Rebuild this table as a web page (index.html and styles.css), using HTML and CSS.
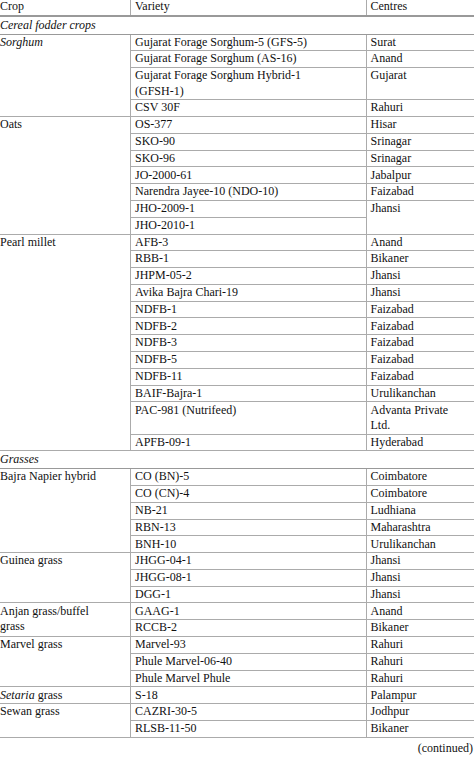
FILE: index.html
```html
<!DOCTYPE html>
<html>
<head>
<meta charset="utf-8">
<link rel="stylesheet" href="styles.css">
</head>
<body>
<table class="tbl">
<colgroup><col class="c-crop"><col class="c-var"><col class="c-cen"></colgroup>
<thead>
<tr class="head"><th class="crop">Crop</th><th class="var">Variety</th><th class="cen">Centres</th></tr>
</thead>
<tbody>
<tr class="sec"><td colspan="3"><i>Cereal fodder crops</i></td></tr>
<tr><td class="crop" rowspan="4"><i>Sorghum</i></td><td class="var">Gujarat Forage Sorghum-5 (GFS-5)</td><td class="cen">Surat</td></tr>
<tr><td class="var">Gujarat Forage Sorghum (AS-16)</td><td class="cen">Anand</td></tr>
<tr><td class="var">Gujarat Forage Sorghum Hybrid-1<br>(GFSH-1)</td><td class="cen">Gujarat</td></tr>
<tr><td class="var">CSV 30F</td><td class="cen">Rahuri</td></tr>
<tr><td class="crop" rowspan="7">Oats</td><td class="var">OS-377</td><td class="cen">Hisar</td></tr>
<tr><td class="var">SKO-90</td><td class="cen">Srinagar</td></tr>
<tr><td class="var">SKO-96</td><td class="cen">Srinagar</td></tr>
<tr><td class="var">JO-2000-61</td><td class="cen">Jabalpur</td></tr>
<tr><td class="var">Narendra Jayee-10 (NDO-10)</td><td class="cen">Faizabad</td></tr>
<tr><td class="var">JHO-2009-1</td><td class="cen" rowspan="2">Jhansi</td></tr>
<tr><td class="var">JHO-2010-1</td></tr>
<tr><td class="crop" rowspan="12">Pearl millet</td><td class="var">AFB-3</td><td class="cen">Anand</td></tr>
<tr><td class="var">RBB-1</td><td class="cen">Bikaner</td></tr>
<tr><td class="var">JHPM-05-2</td><td class="cen">Jhansi</td></tr>
<tr><td class="var">Avika Bajra Chari-19</td><td class="cen">Jhansi</td></tr>
<tr><td class="var">NDFB-1</td><td class="cen">Faizabad</td></tr>
<tr><td class="var">NDFB-2</td><td class="cen">Faizabad</td></tr>
<tr><td class="var">NDFB-3</td><td class="cen">Faizabad</td></tr>
<tr><td class="var">NDFB-5</td><td class="cen">Faizabad</td></tr>
<tr><td class="var">NDFB-11</td><td class="cen">Faizabad</td></tr>
<tr><td class="var">BAIF-Bajra-1</td><td class="cen">Urulikanchan</td></tr>
<tr><td class="var">PAC-981 (Nutrifeed)</td><td class="cen">Advanta Private<br>Ltd.</td></tr>
<tr><td class="var">APFB-09-1</td><td class="cen">Hyderabad</td></tr>
<tr class="sec"><td colspan="3"><i>Grasses</i></td></tr>
<tr><td class="crop" rowspan="5">Bajra Napier hybrid</td><td class="var">CO (BN)-5</td><td class="cen">Coimbatore</td></tr>
<tr><td class="var">CO (CN)-4</td><td class="cen">Coimbatore</td></tr>
<tr><td class="var">NB-21</td><td class="cen">Ludhiana</td></tr>
<tr><td class="var">RBN-13</td><td class="cen">Maharashtra</td></tr>
<tr><td class="var">BNH-10</td><td class="cen">Urulikanchan</td></tr>
<tr><td class="crop" rowspan="3">Guinea grass</td><td class="var">JHGG-04-1</td><td class="cen">Jhansi</td></tr>
<tr><td class="var">JHGG-08-1</td><td class="cen">Jhansi</td></tr>
<tr><td class="var">DGG-1</td><td class="cen">Jhansi</td></tr>
<tr><td class="crop" rowspan="2">Anjan grass/buffel<br>grass</td><td class="var">GAAG-1</td><td class="cen">Anand</td></tr>
<tr><td class="var">RCCB-2</td><td class="cen">Bikaner</td></tr>
<tr><td class="crop" rowspan="3">Marvel grass</td><td class="var">Marvel-93</td><td class="cen">Rahuri</td></tr>
<tr><td class="var">Phule Marvel-06-40</td><td class="cen">Rahuri</td></tr>
<tr><td class="var">Phule Marvel Phule</td><td class="cen">Rahuri</td></tr>
<tr><td class="crop"><i>Setaria</i> grass</td><td class="var">S-18</td><td class="cen">Palampur</td></tr>
<tr><td class="crop" rowspan="2">Sewan grass</td><td class="var">CAZRI-30-5</td><td class="cen">Jodhpur</td></tr>
<tr><td class="var">RLSB-11-50</td><td class="cen">Bikaner</td></tr>
</tbody>
</table>
<div class="cont">(continued)</div>
</body>
</html>
```
FILE: styles.css
```css
html, body {
  margin: 0;
  padding: 0;
  background: #ffffff;
}
body {
  font-family: "Liberation Serif", "Times New Roman", serif;
  font-size: 12px;
  color: #111111;
  width: 474px;
  overflow: hidden;
}
.tbl {
  border-collapse: collapse;
  table-layout: fixed;
  width: 474px;
  margin-top: -1px;
}
.c-crop { width: 130px; }
.c-var { width: 236px; }
.c-cen { width: 108px; }
.tbl th, .tbl td {
  font-weight: normal;
  text-align: left;
  vertical-align: top;
  line-height: 15.4px;
  padding: 0.2px 4px 0.2px 4px;
  border-bottom: 1px solid #ababab;
  white-space: nowrap;
}
.tbl .crop {
  padding-left: 0;
}
.tbl .var, .tbl .cen {
  border-left: 1px solid #ababab;
}
.tbl .var {
  padding-left: 4.5px;
}
.tbl .head th {
  padding-top: 0;
  border-bottom: 2px solid #999999;
}
.tbl .sec td {
  padding: 1px 0 0.5px 0;
  border-top: 1px solid #999999;
  border-bottom: 1px solid #999999;
}
.cont {
  text-align: right;
  margin-top: 4px;
  padding-right: 1px;
  line-height: 13px;
}
```
